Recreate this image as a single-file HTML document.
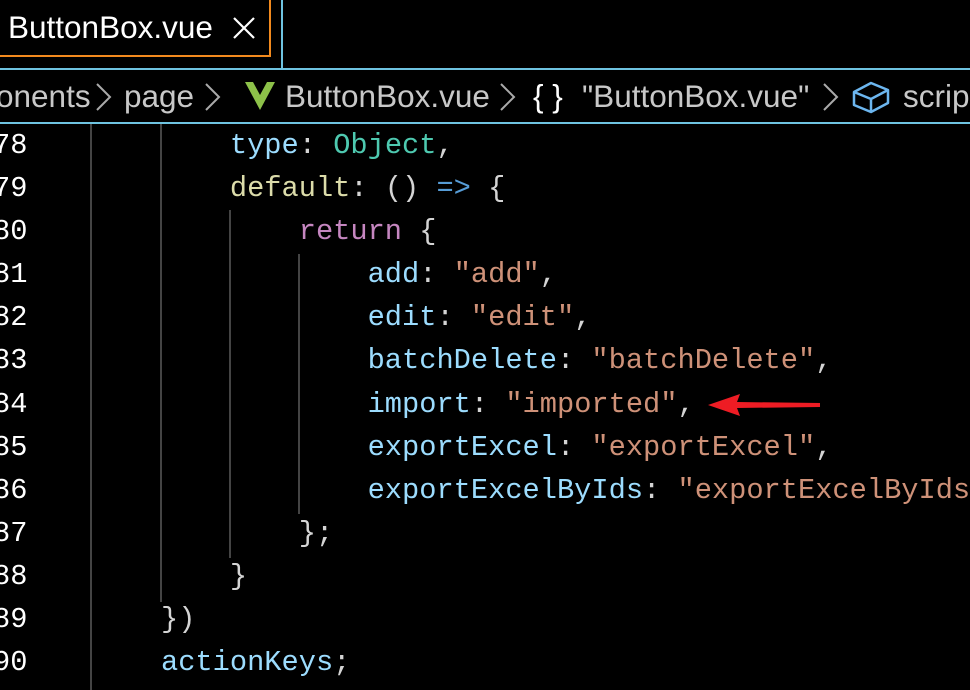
<!DOCTYPE html>
<html><head><meta charset="utf-8"><style>
body{margin:0;width:970px;height:690px;background:#000;overflow:hidden;position:relative;font-family:"Liberation Sans",sans-serif}
.abs{position:absolute}
.tab{left:-5px;top:-3px;width:276px;height:60px;border:2px solid #f28a1e;box-sizing:border-box}
.tabt{left:8px;top:9px;font-size:31.5px;color:#fff;white-space:nowrap}
.vl{left:281px;top:0;width:2px;height:69px;background:#6ec3e0}
.hl{left:0;width:970px;height:2px;background:#6ec3e0}
.bc{top:78px;font-size:31.5px;color:#c8c8c8;white-space:nowrap}
.code{left:0;top:124px;font-family:"Liberation Mono",monospace;font-size:28.7px}
.ln{position:absolute;left:0;width:970px;height:43px;line-height:43px;white-space:pre;color:#d4d4d4}
.n{position:absolute;left:-7px;color:#fff}
.c{position:absolute;left:161px}
.g{position:absolute;width:2px;background:#444}
.p{color:#9cdcfe}.t{color:#4ec9b0}.f{color:#dcdcaa}.k{color:#c586c0}.s{color:#ce9178}.o{color:#569cd6}.w{color:#fff}
</style></head><body>
<div class="abs tab"></div>
<div class="abs tabt">ButtonBox.vue</div>
<svg class="abs" style="left:232px;top:16px" width="24" height="24"><path d="M2 2L22 22M22 2L2 22" stroke="#fff" stroke-width="2.2"/></svg>
<div class="abs vl"></div>
<div class="abs hl" style="top:68px"></div>
<div class="abs bc" style="left:-4px">onents</div>
<div class="abs bc" style="left:124px">page</div>
<div class="abs bc" style="left:285px">ButtonBox.vue</div>
<div class="abs bc" style="left:533px;color:#fff">{ }</div>
<div class="abs bc" style="left:582px">"ButtonBox.vue"</div>
<div class="abs bc" style="left:903px">scrip</div>
<svg class="abs" style="left:0;top:70px" width="970" height="52">
<g fill="none" stroke="#aaa" stroke-width="2"><path d="M97 14l13 13-13 13M206 14l13 13-13 13M501 14l13 13-13 13M824 14l13 13-13 13"/></g>
<path d="M245 12h8l7 13 7-13h8L260 40z" fill="#8dc149"/>
<g fill="none" stroke="#6cb6ef" stroke-width="2.5" stroke-linejoin="round"><path d="M854 22l17-9 17 7v13l-17 9-17-7z"/><path d="M854 22l17 7 17-9M871 29v13"/></g>
</svg>
<div class="abs hl" style="top:122px"></div>
<div class="g" style="left:90px;top:124px;height:566px"></div>
<div class="g" style="left:160px;top:124px;height:478px"></div>
<div class="g" style="left:229px;top:210px;height:348px"></div>
<div class="g" style="left:298px;top:254px;height:260px"></div>
<div class="abs code">
<div class="ln" style="top:0"><span class="n">78</span><span class="c">    <span class="p">type</span>: <span class="t">Object</span>,</span></div>
<div class="ln" style="top:43px"><span class="n">79</span><span class="c">    <span class="f">default</span>: () <span class="o">=&gt;</span> {</span></div>
<div class="ln" style="top:86px"><span class="n">80</span><span class="c">        <span class="k">return</span> {</span></div>
<div class="ln" style="top:129px"><span class="n">81</span><span class="c">            <span class="p">add</span>: <span class="s">"add"</span>,</span></div>
<div class="ln" style="top:172px"><span class="n">82</span><span class="c">            <span class="p">edit</span>: <span class="s">"edit"</span>,</span></div>
<div class="ln" style="top:215px"><span class="n">83</span><span class="c">            <span class="p">batchDelete</span>: <span class="s">"batchDelete"</span>,</span></div>
<div class="ln" style="top:259px"><span class="n">84</span><span class="c">            <span class="p">import</span>: <span class="s">"imported"</span>,</span></div>
<div class="ln" style="top:302px"><span class="n">85</span><span class="c">            <span class="p">exportExcel</span>: <span class="s">"exportExcel"</span>,</span></div>
<div class="ln" style="top:345px"><span class="n">86</span><span class="c">            <span class="p">exportExcelByIds</span>: <span class="s">"exportExcelByIds"</span></span></div>
<div class="ln" style="top:388px"><span class="n">87</span><span class="c">        };</span></div>
<div class="ln" style="top:431px"><span class="n">88</span><span class="c">    }</span></div>
<div class="ln" style="top:474px"><span class="n">89</span><span class="c">})</span></div>
<div class="ln" style="top:517px"><span class="n">90</span><span class="c"><span class="p">actionKeys</span>;</span></div>
</div>
<svg class="abs" style="left:700px;top:390px" width="130" height="30"><path d="M8 15L40 4 37 12 120 13 120 17 37 18 40 26z" fill="#ee1c24"/></svg>
</body></html>
